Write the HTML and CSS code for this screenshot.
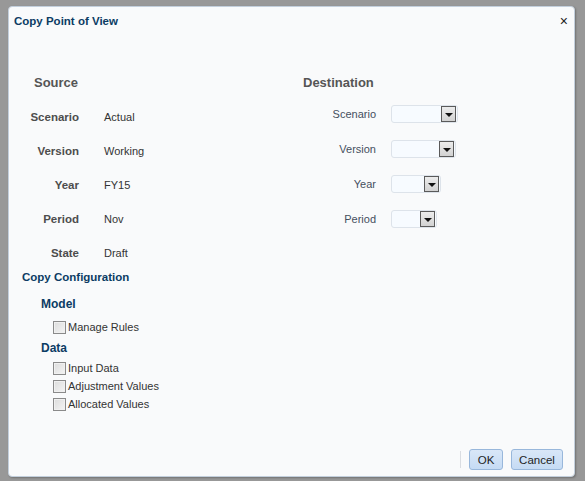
FILE: index.html
```html
<!DOCTYPE html>
<html>
<head>
<meta charset="utf-8">
<link rel="stylesheet" href="styles.css">
</head>
<body>
<div class="dialog">
  <div class="header">
    <div class="title">Copy Point of View</div>
    <div class="close">&#x00D7;</div>
  </div>
  <div class="content">
    <div class="columns">
      <div class="source">
        <div class="heading src-heading">Source</div>
        <div class="srow"><span class="slabel">Scenario</span><span class="svalue">Actual</span></div>
        <div class="srow"><span class="slabel">Version</span><span class="svalue">Working</span></div>
        <div class="srow"><span class="slabel">Year</span><span class="svalue">FY15</span></div>
        <div class="srow"><span class="slabel">Period</span><span class="svalue">Nov</span></div>
        <div class="srow"><span class="slabel">State</span><span class="svalue">Draft</span></div>
      </div>
      <div class="dest">
        <div class="heading dest-heading">Destination</div>
        <div class="drow"><span class="dlabel">Scenario</span><span class="select w67"><span class="sel-btn"></span></span></div>
        <div class="drow"><span class="dlabel">Version</span><span class="select w65"><span class="sel-btn"></span></span></div>
        <div class="drow"><span class="dlabel">Year</span><span class="select w50"><span class="sel-btn"></span></span></div>
        <div class="drow"><span class="dlabel">Period</span><span class="select w46"><span class="sel-btn"></span></span></div>
      </div>
    </div>
    <div class="config">
      <div class="config-title">Copy Configuration</div>
      <div class="group-title model">Model</div>
      <label class="check first-model"><span class="box"></span>Manage Rules</label>
      <div class="group-title data">Data</div>
      <label class="check first-data"><span class="box"></span>Input Data</label>
      <label class="check"><span class="box"></span>Adjustment Values</label>
      <label class="check"><span class="box"></span>Allocated Values</label>
    </div>
  </div>
  <div class="footer">
    <span class="sep"></span>
    <button class="btn ok">OK</button>
    <button class="btn cancel">Cancel</button>
  </div>
</div>
</body>
</html>
```

FILE: styles.css
```css
html, body {
  margin: 0;
  padding: 0;
  background: #989898;
  height: 100%;
}
body {
  font-family: "Liberation Sans", Arial, sans-serif;
  font-size: 11px;
  overflow: hidden;
}
.dialog {
  margin: 6px 0 0 8px;
  width: 567px;
  height: 471px;
  box-sizing: border-box;
  background: #f9fafb;
  border: 1px solid #c3cfdc;
  border-radius: 4px;
  display: flex;
  flex-direction: column;
  box-shadow: 1px 1px 2px rgba(0,0,0,0.25);
}
.header {
  display: flex;
  justify-content: space-between;
  align-items: center;
  padding: 4px 6px 0 5px;
  height: 20px;
}
.title {
  font-weight: bold;
  font-size: 11.5px;
  color: #0c3c64;
}
.close {
  font-size: 14px;
  color: #222;
  line-height: 14px;
}
.content {
  flex: 1;
  padding: 35px 0 0 13px;
}
.columns {
  display: flex;
}
.source {
  width: 280px;
}
.heading {
  font-weight: bold;
  font-size: 13px;
  color: #555;
}
.src-heading {
  height: 34px;
  line-height: 34px;
  padding-left: 12px;
}
.srow {
  display: flex;
  height: 34px;
  line-height: 34px;
}
.slabel {
  width: 57px;
  text-align: right;
  font-weight: bold;
  color: #4d4d4d;
  font-size: 11.5px;
}
.svalue {
  margin-left: 25px;
  color: #333;
}
.dest {
  margin-left: 1px;
}
.dest-heading {
  height: 30px;
  line-height: 34px;
}
.drow {
  display: flex;
  align-items: center;
  height: 35px;
}
.dlabel {
  width: 73px;
  text-align: right;
  color: #454f5e;
}
.select {
  margin-left: 15px;
  height: 18px;
  box-sizing: border-box;
  border: 1px solid #dde3ea;
  border-radius: 3px;
  background: #f7fbff;
  display: flex;
  justify-content: flex-end;
  align-items: center;
  padding-right: 1px;
}
.w67 { width: 67px; }
.w65 { width: 65px; }
.w50 { width: 50px; }
.w46 { width: 46px; }
.sel-btn {
  width: 15px;
  height: 16px;
  box-sizing: border-box;
  border: 1px solid #5a5a5a;
  background: linear-gradient(#ececec, #d2d2d2);
  position: relative;
}
.sel-btn::after {
  content: "";
  position: absolute;
  left: 3px;
  top: 6px;
  border-left: 4px solid transparent;
  border-right: 4px solid transparent;
  border-top: 4px solid #111;
}
.config {
  display: flex;
  flex-direction: column;
  align-items: flex-start;
}
.config-title {
  font-weight: bold;
  font-size: 11.5px;
  color: #0c3c64;
  height: 18px;
  line-height: 18px;
  margin-top: -2px;
}
.group-title {
  font-weight: bold;
  font-size: 12px;
  color: #0c3c64;
  padding-left: 19px;
  height: 18px;
  line-height: 18px;
}
.model {
  margin-top: 9px;
}
.first-model {
  margin-top: 5px;
}
.data {
  margin-top: 3px;
}
.first-data {
  margin-top: 2px;
}
.check {
  display: flex;
  align-items: center;
  padding-left: 31px;
  height: 18px;
  color: #333;
}
.box {
  width: 13px;
  height: 13px;
  box-sizing: border-box;
  border: 1px solid #8a8a8a;
  background: linear-gradient(135deg, #dcdcdc, #f4f4f4);
  box-shadow: inset 0 0 0 1px #f0f0f0;
  margin-right: 2px;
}
.footer {
  display: flex;
  justify-content: flex-end;
  align-items: center;
  padding: 0 11px 6px 0;
  gap: 8px;
}
.sep {
  width: 1px;
  height: 17px;
  background: #dadde2;
}
.btn {
  font-family: "Liberation Sans", Arial, sans-serif;
  font-size: 11.5px;
  color: #1e1e1e;
  height: 21px;
  box-sizing: border-box;
  border: 1px solid #98b7db;
  border-radius: 3px;
  background: linear-gradient(#d9e7f8, #c5dbf4);
  padding: 0;
}
.ok { width: 34px; }
.cancel { width: 52px; }
```
